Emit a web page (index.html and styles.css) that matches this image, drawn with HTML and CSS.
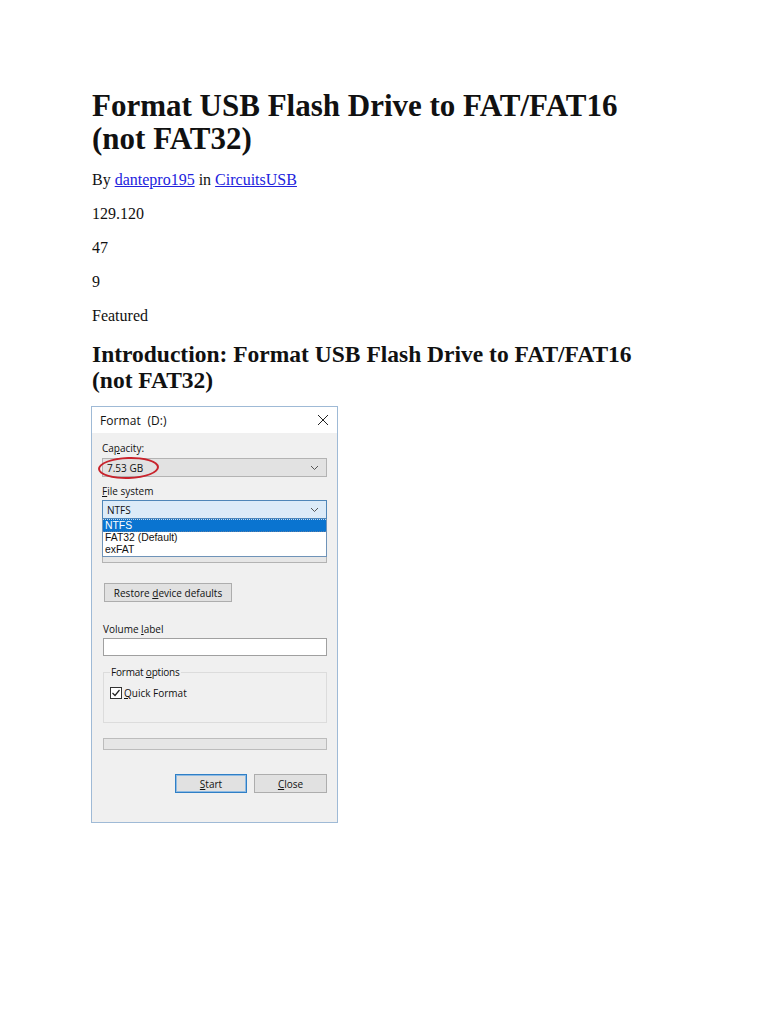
FILE: index.html
```html
<!DOCTYPE html>
<html>
<head>
<meta charset="utf-8">
<title>Format USB Flash Drive to FAT/FAT16 (not FAT32)</title>
<link rel="stylesheet" href="styles.css">
</head>
<body>
<div class="page">
  <h1 class="title">Format USB Flash Drive to FAT/FAT16 (not FAT32)</h1>
  <p class="meta">By <a href="#">dantepro195</a> in <a href="#">CircuitsUSB</a></p>
  <p class="meta">129.120</p>
  <p class="meta">47</p>
  <p class="meta">9</p>
  <p class="meta">Featured</p>
  <h2 class="intro">Introduction: Format USB Flash Drive to FAT/FAT16 (not FAT32)</h2>

  <div class="dialog">
    <div class="titlebar">
      <span class="dtitle">Format&nbsp; (D:)</span>
      <svg class="xicon" width="12" height="12" viewBox="0 0 12 12"><path d="M1 1 L11 11 M11 1 L1 11" stroke="#222" stroke-width="1" fill="none"/></svg>
    </div>
    <div class="dbody">
      <div class="lbl l-cap">Ca<u>p</u>acity:</div>
      <div class="combo combo-cap">
        <span>7.53 GB</span>
        <svg class="chev" width="9" height="6" viewBox="0 0 9 6"><path d="M1 1 L4.5 4.5 L8 1" stroke="#555" stroke-width="1" fill="none"/></svg>
        <span class="circle"></span>
      </div>
      <div class="lbl l-fs"><u>F</u>ile system</div>
      <div class="fswrap">
        <div class="combo combo-fs">
          <span>NTFS</span>
          <svg class="chev" width="9" height="6" viewBox="0 0 9 6"><path d="M1 1 L4.5 4.5 L8 1" stroke="#555" stroke-width="1" fill="none"/></svg>
        </div>
        <div class="list">
          <div class="opt sel">NTFS</div>
          <div class="opt">FAT32 (Default)</div>
          <div class="opt">exFAT</div>
        </div>
        <div class="hidden-combo"></div>
      </div>
      <div class="btn btn-restore"><span>Restore <u>d</u>evice defaults</span></div>
      <div class="lbl l-vol">Volume <u>l</u>abel</div>
      <div class="input"></div>
      <div class="group">
        <span class="legend">Format <u>o</u>ptions</span>
        <div class="check-row">
          <svg class="cbox" width="12" height="12" viewBox="0 0 12 12"><rect x="0.5" y="0.5" width="11" height="11" fill="#fff" stroke="#333"/><path d="M2.5 6 L5 8.5 L9.5 3" stroke="#222" stroke-width="1.2" fill="none"/></svg>
          <span><u>Q</u>uick Format</span>
        </div>
      </div>
      <div class="progress"></div>
      <div class="btnrow">
        <div class="btn btn-start"><span><u>S</u>tart</span></div>
        <div class="btn btn-close"><span><u>C</u>lose</span></div>
      </div>
    </div>
  </div>
</div>
</body>
</html>
```

FILE: styles.css
```css
html, body {
  margin: 0;
  padding: 0;
  background: #fff;
}
.page {
  padding: 89px 0 0 92px;
  font-family: "Liberation Serif", "Times New Roman", serif;
  color: #111;
}
.title {
  font-size: 31px;
  line-height: 33px;
  font-weight: bold;
  margin: 0 0 16px 0;
  width: 560px;
}
.meta {
  font-size: 16px;
  line-height: 18px;
  margin: 0 0 16px 0;
}
.meta a {
  color: #2222dd;
}
.intro {
  font-size: 23.5px;
  line-height: 26px;
  font-weight: bold;
  margin: 15px 0 13px 0;
  width: 560px;
}

/* dialog */
.dialog {
  width: 245px;
  height: 415px;
  margin-left: -1px;
  border: 1px solid #9fbad6;
  background: #f0f0f0;
  font-family: "Open Sans", "DejaVu Sans", sans-serif;
  font-size: 10px;
  color: #111;
  position: relative;
}
.titlebar {
  height: 26px;
  background: #fff;
  display: flex;
  align-items: center;
  justify-content: space-between;
  padding: 0 8px 0 8px;
}
.dtitle {
  font-size: 12px;
  letter-spacing: 0.1px;
}
.xicon { display: block; }
.dbody {
  padding: 0 10px 0 10px;
  display: flex;
  flex-direction: column;
}
.lbl {
  height: 14px;
  line-height: 14px;
  font-size: 10px;
}
.l-cap { margin-top: 8px; }
.l-fs { margin-top: 7px; }
.l-vol { margin-top: 20px; margin-left: 1px; }
.combo {
  height: 17px;
  display: flex;
  align-items: center;
  justify-content: space-between;
  padding: 0 7px 0 4px;
  position: relative;
}
.combo-cap {
  margin-top: 3px;
  background: #e2e2e2;
  border: 1px solid #b3b3b3;
}
.circle {
  position: absolute;
  left: -5px;
  top: -2px;
  width: 57px;
  height: 18px;
  border: 2px solid #c8232c;
  border-radius: 50%;
  transform: rotate(-2deg);
}
.fswrap {
  margin-top: 2px;
  display: flex;
  flex-direction: column;
}
.combo-fs {
  background: #dcebf8;
  border: 1px solid #4f86b8;
}
.list {
  height: 37px;
  background: #fff;
  border: 1px solid #6f93b8;
  border-top: 0;
  display: flex;
  flex-direction: column;
  overflow: hidden;
}
.opt {
  height: 12px;
  line-height: 12px;
  padding-left: 2px;
  font-family: "Liberation Sans", Arial, sans-serif;
  font-size: 10.4px;
}
.opt.sel {
  background: #0a74d0;
  color: #fff;
  border-top: 1px dotted #c9d8e8;
  border-bottom: 1px dotted #5c7fa6;
  height: 11px;
  line-height: 11px;
}
.hidden-combo {
  height: 5px;
  background: #e6e6e6;
  border: 1px solid #b3b3b3;
  border-top: 0;
}
.btn {
  display: flex;
  align-items: center;
  justify-content: center;
  height: 17px;
  background: #e1e1e1;
  border: 1px solid #adadad;
  font-size: 10px;
}
.btn-restore {
  margin-top: 20px;
  margin-left: 2px;
  width: 126px;
}
.input {
  margin-top: 2px;
  margin-left: 1px;
  height: 16px;
  background: #fff;
  border: 1px solid #a0a0a0;
}
.group {
  margin-top: 16px;
  margin-left: 1px;
  height: 49px;
  border: 1px solid #dcdcdc;
  position: relative;
}
.legend {
  position: absolute;
  left: 6px;
  top: -8px;
  background: #f0f0f0;
  padding: 0 1px;
  line-height: 14px;
  letter-spacing: -0.2px;
}
.check-row {
  margin: 13px 0 0 6px;
  display: flex;
  align-items: center;
  gap: 2px;
}
.cbox { display: block; }
.progress {
  margin-top: 15px;
  margin-left: 1px;
  height: 10px;
  background: #e6e6e6;
  border: 1px solid #bcbcbc;
}
.btnrow {
  margin-top: 24px;
  display: flex;
  justify-content: flex-end;
  gap: 7px;
}
.btn-start {
  width: 70px;
  border: 1px solid #2f7fc6;
  box-shadow: inset 0 0 0 1px #8fbbe3;
}
.btn-close {
  width: 71px;
}
```
